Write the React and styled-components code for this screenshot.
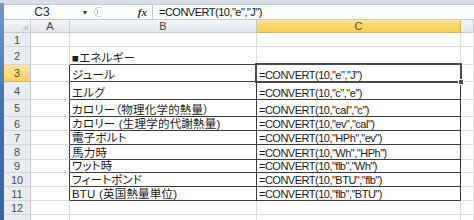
import React from "react";
import styled, { createGlobalStyle, css } from "styled-components";

const GlobalStyle = createGlobalStyle`
  html, body { margin: 0; padding: 0; background: #ffffff; }
  body { width: 474px; height: 220px; overflow: hidden; font-family: "Liberation Sans", "Noto Sans CJK JP", sans-serif; }
`;

const Window = styled.div`
  display: flex;
  width: 474px;
  height: 220px;
  overflow: hidden;
  background: #d9dee5;
`;

const FrameEdge = styled.div`
  width: 4px;
  margin-top: 3px;
  background: linear-gradient(180deg, #6f98cc 0%, #3f72b6 50%, #2f62a6 100%);
  flex-shrink: 0;
`;

const Main = styled.div`
  flex: 1;
  display: flex;
  flex-direction: column;
  padding-top: 4px;
  min-width: 0;
`;

const FormulaBar = styled.div`
  display: flex;
  align-items: stretch;
  height: 16px;
  background: #ffffff;
  border-top: 1px solid #c3c9d2;
  border-bottom: 1px solid #c3c9d2;
`;

const NameBox = styled.div`
  width: 76px;
  display: flex;
  align-items: center;
  justify-content: center;
  font-size: 12px;
  color: #1e1e1e;
`;

const Dropdown = styled.div`
  width: 10px;
  display: flex;
  align-items: center;
  justify-content: center;
  font-size: 7px;
  color: #333;
`;

const Splitter = styled.div`
  width: 6px;
  margin: 2px 0 2px 4px;
  border: 1px solid #c8ccd2;
  border-right: none;
  border-radius: 6px 0 0 6px;
  display: flex;
  align-items: center;
  justify-content: center;
  &::after {
    content: "";
    width: 2px;
    height: 4px;
    border-left: 1px dotted #9aa2ad;
  }
`;

const FxArea = styled.div`
  width: 46px;
  display: flex;
  align-items: center;
  justify-content: flex-end;
  padding-right: 5px;
  border-right: 1px solid #c3c9d2;
  font-family: "Liberation Serif", serif;
  font-style: italic;
  font-weight: bold;
  font-size: 11px;
  color: #333;
`;

const FormulaText = styled.div`
  flex: 1;
  display: flex;
  align-items: center;
  padding-left: 6px;
  font-size: 11px;
  letter-spacing: -0.5px;
  color: #111;
  white-space: nowrap;
`;

const Gap = styled.div`
  height: 2px;
  background: #dfe3e9;
`;

const Sheet = styled.div`
  flex: 1;
  display: grid;
  grid-template-columns: 27px 39px 187px 204px 1fr;
  grid-template-rows: 13px 14px 18px 17px 18px 17px 14px 14px 15px 13px 14px 14px 14px 20px;
  background: #ffffff;
`;

const Corner = styled.div`
  background: linear-gradient(180deg, #f4f6f8, #e4e8ed);
  border-right: 1px solid #c5cbd3;
  border-bottom: 1px solid #c5cbd3;
  display: flex;
  align-items: flex-end;
  justify-content: flex-end;
  padding: 0 2px 2px 0;
  &::after {
    content: "";
    width: 0;
    height: 0;
    border-left: 6px solid transparent;
    border-bottom: 6px solid #c9cdd3;
  }
`;

const ColHead = styled.div`
  display: flex;
  align-items: center;
  justify-content: center;
  font-size: 11px;
  color: #444;
  border-right: 1px solid #c5cbd3;
  border-bottom: 1px solid #c5cbd3;
  background: linear-gradient(180deg, #f6f7f9, #e3e7ec);
  ${(p) =>
    p.$active &&
    css`
      background: linear-gradient(180deg, #fbe7a6 0%, #f9d56d 45%, #f7cd5c 100%);
      border-right-color: #e2b33e;
      border-bottom-color: #e2b33e;
      color: #5a4a1c;
    `}
`;

const RowHead = styled.div`
  display: flex;
  align-items: center;
  justify-content: center;
  font-size: 11px;
  color: #4a4a4a;
  background: #e9edf2;
  border-right: 1px solid #c5cbd3;
  border-bottom: 1px solid #d0d5dc;
  ${(p) =>
    p.$active &&
    css`
      background: linear-gradient(180deg, #fbe3a0 0%, #f8d06a 100%);
      border-bottom-color: #e2b33e;
      color: #5a4a1c;
    `}
`;

const Cell = styled.div`
  position: relative;
  display: flex;
  align-items: flex-end;
  padding: 0 0 0 2px;
  white-space: nowrap;
  overflow: visible;
  border-right: 1px solid ${(p) => (p.$rightDark ? "#3a3a3a" : "#dadcdf")};
  border-bottom: 1px solid ${(p) => (p.$bottomDark ? "#3a3a3a" : "#dadcdf")};
  font-family: ${(p) =>
    p.$jp
      ? `"Liberation Sans", "Noto Sans CJK JP", sans-serif`
      : `"Liberation Sans", sans-serif`};
  font-feature-settings: "palt";
  font-size: ${(p) => (p.$jp ? "11.5px" : "11px")};
  letter-spacing: ${(p) => (p.$jp ? "0.2px" : "-0.5px")};
  line-height: 12px;
  color: #1a1a1a;
  ${(p) =>
    p.$selected &&
    css`
      &::after {
        content: "";
        position: absolute;
        left: -2px;
        top: -2px;
        right: -2px;
        bottom: -2px;
        border: 2px solid #4a4a4a;
        pointer-events: none;
      }
      &::before {
        content: "";
        position: absolute;
        right: -4px;
        bottom: -4px;
        width: 4px;
        height: 4px;
        background: #4a4a4a;
        border: 1px solid #fff;
        z-index: 2;
      }
    `}
`;

const rows = [
  { n: 1, b: "", c: "" },
  { n: 2, b: "■エネルギー", c: "" },
  { n: 3, b: "ジュール", c: '=CONVERT(10,"e","J")' },
  { n: 4, b: "エルグ", c: '=CONVERT(10,"c","e")' },
  { n: 5, b: "カロリー（物理化学的熱量）", c: '=CONVERT(10,"cal","c")' },
  { n: 6, b: "カロリー (生理学的代謝熱量)", c: '=CONVERT(10,"ev","cal")' },
  { n: 7, b: "電子ボルト", c: '=CONVERT(10,"HPh","ev")' },
  { n: 8, b: "馬力時", c: '=CONVERT(10,"Wh","HPh")' },
  { n: 9, b: "ワット時", c: '=CONVERT(10,"flb","Wh")' },
  { n: 10, b: "フィートポンド", c: '=CONVERT(10,"BTU","flb")' },
  { n: 11, b: "BTU (英国熱量単位)", c: '=CONVERT(10,"flb","BTU")' },
  { n: 12, b: "", c: "" },
  { n: 13, b: "", c: "", hideLabel: true },
];

export default function App() {
  return (
    <>
      <GlobalStyle />
      <Window>
        <FrameEdge />
        <Main>
          <FormulaBar>
            <NameBox>C3</NameBox>
            <Dropdown>▼</Dropdown>
            <Splitter />
            <FxArea>fx</FxArea>
            <FormulaText>=CONVERT(10,"e","J")</FormulaText>
          </FormulaBar>
          <Gap />
          <Sheet>
            <Corner />
            <ColHead>A</ColHead>
            <ColHead>B</ColHead>
            <ColHead $active>C</ColHead>
            <ColHead />
            {rows.map((r) => {
              const inBox = r.n >= 3 && r.n <= 11;
              const aboveBox = r.n === 2;
              return (
                <React.Fragment key={r.n}>
                  <RowHead $active={r.n === 3}>{r.hideLabel ? "" : r.n}</RowHead>
                  <Cell $rightDark={inBox} />
                  <Cell $jp $rightDark={inBox} $bottomDark={inBox || aboveBox}>
                    {r.b}
                  </Cell>
                  <Cell
                    $rightDark={inBox}
                    $bottomDark={inBox || aboveBox}
                    $selected={r.n === 3}
                  >
                    {r.c}
                  </Cell>
                  <Cell />
                </React.Fragment>
              );
            })}
          </Sheet>
        </Main>
      </Window>
    </>
  );
}
